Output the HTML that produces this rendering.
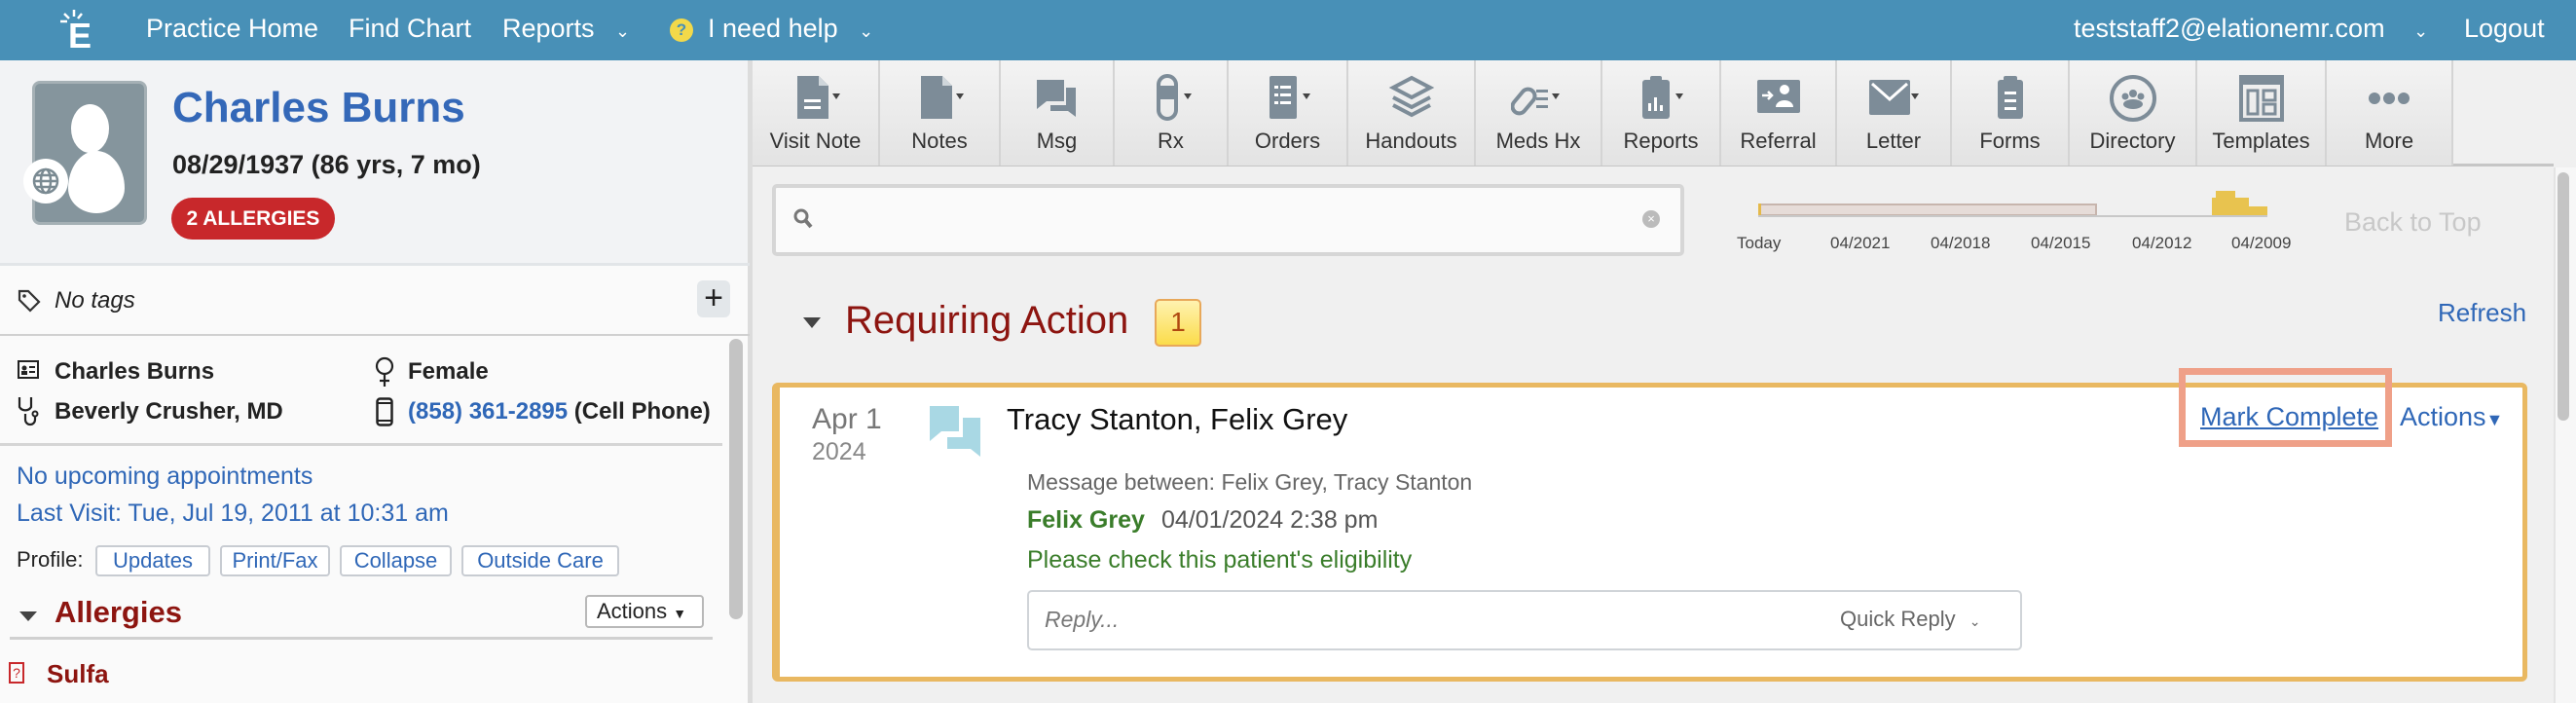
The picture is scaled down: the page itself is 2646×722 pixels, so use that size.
<!DOCTYPE html>
<html><head><meta charset="utf-8"><style>
*{margin:0;padding:0;box-sizing:border-box}
body{width:2646px;height:722px;overflow:hidden;font-family:"Liberation Sans",sans-serif;background:#f0f0f0;position:relative}
.a{position:absolute;white-space:nowrap}
.top{position:absolute;left:0;top:0;width:2646px;height:62px;background:#4890b7}
.nav{color:#fff;font-size:27px;top:14px}
.tb{position:absolute;top:62px;height:108px;border-right:2px solid #d4d4d4;background:linear-gradient(#f3f3f3,#e3e3e3)}
.tb span{position:absolute;bottom:12px;left:0;right:0;text-align:center;font-size:22px;color:#333}
.tb svg{position:absolute;top:14px;left:50%;transform:translateX(-50%)}
.blue{color:#2f67b7}
.pb{position:absolute;top:560px;height:32px;border:2px solid #c8ccd2;border-radius:4px;background:#fff;color:#2f67b7;font-size:22px;text-align:center;line-height:28px}
.tl{font-size:17px;color:#444;top:240px}
</style></head><body>
<div class="top"></div>
<div class="a" style="left:52px;top:30px;width:60px;height:42px;border-radius:0 0 30px 30px;background:#4890b7"></div>
<div class="a" style="left:70px;top:16px;color:#fff;font-size:36px;font-weight:bold">E</div>
<svg class="a" style="left:62px;top:10px" width="24" height="20"><g stroke="#fff" stroke-width="2.5"><line x1="14" y1="0" x2="14" y2="7"/><line x1="4" y1="4" x2="9" y2="9"/><line x1="22" y1="4" x2="18" y2="9"/><line x1="0" y1="12" x2="7" y2="12"/></g></svg>
<div class="a nav" style="left:150px">Practice Home</div>
<div class="a nav" style="left:358px">Find Chart</div>
<div class="a nav" style="left:516px">Reports <span style="font-size:18px;margin-left:14px">&#8964;</span></div>
<div class="a" style="left:688px;top:19px;width:24px;height:24px;border-radius:50%;background:#f2d94a;color:#4890b7;font-size:17px;font-weight:bold;text-align:center;line-height:24px">?</div>
<div class="a nav" style="left:727px">I need help <span style="font-size:18px;margin-left:14px">&#8964;</span></div>
<div class="a nav" style="left:2130px">teststaff2@elationemr.com <span style="font-size:18px;margin-left:22px">&#8964;</span></div>
<div class="a nav" style="left:2531px">Logout</div>

<!-- left panel -->
<div class="a" style="left:0;top:62px;width:770px;height:208px;background:#f2f3f5"></div>
<div class="a" style="left:0;top:270px;width:770px;height:452px;background:#fafafa"></div>
<div class="a" style="left:768px;top:62px;width:5px;height:660px;background:#dcdcdc"></div>
<div class="a" style="left:33px;top:83px;width:118px;height:148px;border-radius:8px;background:#85959d;border:3px solid #a5b0b5"></div>
<div class="a" style="left:73px;top:107px;width:39px;height:50px;border-radius:50%;background:#fff"></div>
<div class="a" style="left:70px;top:155px;width:58px;height:64px;border-radius:50% 50% 50% 50%/60% 60% 40% 40%;background:#fff"></div>
<div class="a" style="left:24px;top:163px;width:46px;height:46px;border-radius:50%;background:#fff"></div>
<svg class="a" style="left:33px;top:172px" width="28" height="28" viewBox="0 0 28 28"><g fill="none" stroke="#7a8a92" stroke-width="2.5"><circle cx="14" cy="14" r="12"/><ellipse cx="14" cy="14" rx="5" ry="12"/><line x1="2" y1="14" x2="26" y2="14"/><line x1="4" y1="8" x2="24" y2="8"/><line x1="4" y1="20" x2="24" y2="20"/></g></svg>
<div class="a" style="left:177px;top:86px;font-size:44px;font-weight:bold;color:#3468b8">Charles Burns</div>
<div class="a" style="left:177px;top:154px;font-size:27px;font-weight:bold;color:#222">08/29/1937 (86 yrs, 7 mo)</div>
<div class="a" style="left:176px;top:203px;width:168px;height:43px;border-radius:22px;background:#c8282b;color:#fff;font-size:21px;font-weight:bold;text-align:center;line-height:43px">2 ALLERGIES</div>

<div class="a" style="left:0;top:270px;width:770px;height:3px;background:#e2e5e8"></div>
<svg class="a" style="left:17px;top:296px" width="26" height="26" viewBox="0 0 26 26"><path d="M3 3h9l11 11-9 9L3 12z" fill="none" stroke="#333" stroke-width="2.2"/><circle cx="8" cy="8" r="1.8" fill="#333"/></svg>
<div class="a" style="left:56px;top:295px;font-size:24px;font-style:italic;color:#222">No tags</div>
<div class="a" style="left:716px;top:288px;width:34px;height:38px;border-radius:6px;background:#e3e7ea;font-size:34px;text-align:center;line-height:36px;color:#222">+</div>
<div class="a" style="left:0;top:343px;width:770px;height:2px;background:#d0d0d0"></div>
<svg class="a" style="left:18px;top:370px" width="22" height="20"><rect x="1" y="1" width="20" height="17" fill="none" stroke="#222" stroke-width="2"/><circle cx="7" cy="8" r="2.5" fill="#222"/><rect x="4" y="11" width="6" height="4" fill="#222"/><line x1="12" y1="7" x2="18" y2="7" stroke="#222" stroke-width="2"/><line x1="12" y1="12" x2="18" y2="12" stroke="#222" stroke-width="2"/></svg>
<div class="a" style="left:56px;top:368px;font-size:24px;font-weight:bold;color:#222">Charles Burns</div>
<svg class="a" style="left:16px;top:406px" width="24" height="32"><path d="M4 2v10a7 7 0 0 0 12 0V2M10 19v6a5 5 0 0 0 10 0v-4" fill="none" stroke="#222" stroke-width="2.2"/><circle cx="20" cy="19" r="2.5" fill="none" stroke="#222" stroke-width="2"/></svg>
<div class="a" style="left:56px;top:409px;font-size:24px;font-weight:bold;color:#222">Beverly Crusher, MD</div>
<svg class="a" style="left:385px;top:366px" width="20" height="32"><circle cx="10" cy="10" r="8" fill="none" stroke="#222" stroke-width="2.2"/><line x1="10" y1="18" x2="10" y2="31" stroke="#222" stroke-width="2.2"/><line x1="5" y1="25" x2="15" y2="25" stroke="#222" stroke-width="2.2"/></svg>
<div class="a" style="left:419px;top:368px;font-size:24px;font-weight:bold;color:#222">Female</div>
<svg class="a" style="left:386px;top:408px" width="18" height="30"><rect x="1.5" y="1.5" width="15" height="27" rx="3" fill="none" stroke="#222" stroke-width="2.5"/><line x1="2" y1="6" x2="16" y2="6" stroke="#222" stroke-width="2"/><line x1="2" y1="24" x2="16" y2="24" stroke="#222" stroke-width="2"/></svg>
<div class="a" style="left:419px;top:409px;font-size:24px;font-weight:bold;color:#222"><span class="blue">(858) 361-2895</span> (Cell Phone)</div>
<div class="a" style="left:0;top:455px;width:742px;height:3px;background:#d5d5d5"></div>
<div class="a blue" style="left:17px;top:475px;font-size:25px">No upcoming appointments</div>
<div class="a blue" style="left:17px;top:513px;font-size:25px">Last Visit: Tue, Jul 19, 2011 at 10:31 am</div>
<div class="a" style="left:17px;top:562px;font-size:22px;color:#222">Profile:</div>
<div class="pb" style="left:98px;width:118px">Updates</div>
<div class="pb" style="left:226px;width:113px">Print/Fax</div>
<div class="pb" style="left:349px;width:115px">Collapse</div>
<div class="pb" style="left:474px;width:162px">Outside Care</div>
<div class="a" style="left:20px;top:628px;width:0;height:0;border-left:9px solid transparent;border-right:9px solid transparent;border-top:10px solid #444"></div>
<div class="a" style="left:56px;top:611px;font-size:31px;font-weight:bold;color:#8d1510">Allergies</div>
<div class="a" style="left:601px;top:611px;width:122px;height:34px;border:2px solid #b8b8b8;border-radius:4px;background:#fff;font-size:22px;padding-left:10px;line-height:30px;color:#222">Actions <span style="font-size:14px">&#9660;</span></div>
<div class="a" style="left:10px;top:654px;width:722px;height:3px;background:#d0d0d0"></div>
<div class="a" style="left:9px;top:680px;width:16px;height:22px;border:2px solid #c8282b;color:#c8282b;font-size:14px;text-align:center;line-height:18px">?</div>
<div class="a" style="left:48px;top:677px;font-size:26px;font-weight:bold;color:#8d1510">Sulfa</div>
<div class="a" style="left:749px;top:348px;width:14px;height:288px;border-radius:7px;background:#c4c4c4"></div>

<!-- toolbar -->
<div class="a" style="left:773px;top:62px;width:1873px;height:108px;background:#f0f0f0"></div>
<div class="a" style="left:773px;top:168px;width:1850px;height:3px;background:#c6c6c6"></div>
<div class="tb" style="left:773px;width:131px"><svg width="50" height="50"><path d="M6 2h22l10 10v34H6z" fill="#7d8c98"/><path d="M28 2v10h10" fill="#cfd6db"/><rect x="13" y="26" width="17" height="3" fill="#fff"/><rect x="13" y="33" width="17" height="3" fill="#fff"/><path d="M42 20h8l-4 6z" fill="#444"/></svg><span>Visit Note</span></div>
<div class="tb" style="left:904px;width:124px"><svg width="50" height="50"><path d="M6 2h22l10 10v34H6z" fill="#7d8c98"/><path d="M28 2v10h10" fill="#cfd6db"/><path d="M42 20h8l-4 6z" fill="#444"/></svg><span>Notes</span></div>
<div class="tb" style="left:1028px;width:117px"><svg width="50" height="50"><path d="M4 6h28v22H14l-10 8z" fill="#7d8c98"/><path d="M34 14h10v30l-8-6H18v-6h16z" fill="#7d8c98"/></svg><span>Msg</span></div>
<div class="tb" style="left:1145px;width:117px"><svg width="50" height="50"><rect x="12" y="2" width="18" height="44" rx="9" fill="none" stroke="#7d8c98" stroke-width="4"/><path d="M12 12h18v14H12z" fill="#7d8c98"/><path d="M38 20h8l-4 6z" fill="#444"/></svg><span>Rx</span></div>
<div class="tb" style="left:1262px;width:123px"><svg width="50" height="50"><rect x="6" y="2" width="28" height="44" rx="2" fill="#7d8c98"/><g fill="#fff"><rect x="11" y="12" width="4" height="3"/><rect x="11" y="20" width="4" height="3"/><rect x="11" y="28" width="4" height="3"/><rect x="17" y="12" width="11" height="3"/><rect x="17" y="20" width="11" height="3"/><rect x="17" y="28" width="11" height="3"/></g><path d="M40 20h8l-4 6z" fill="#444"/></svg><span>Orders</span></div>
<div class="tb" style="left:1385px;width:131px"><svg width="50" height="50"><g fill="none" stroke="#7d8c98" stroke-width="4"><path d="M6 14l19-10 19 10-19 10z"/><path d="M6 24l19 10 19-10"/><path d="M6 32l19 10 19-10"/></g></svg><span>Handouts</span></div>
<div class="tb" style="left:1516px;width:130px"><svg width="56" height="50"><rect x="6" y="14" width="14" height="28" rx="7" transform="rotate(40 13 28)" fill="none" stroke="#7d8c98" stroke-width="4"/><g fill="#7d8c98"><rect x="26" y="16" width="12" height="3"/><rect x="26" y="24" width="12" height="3"/><rect x="26" y="32" width="12" height="3"/></g><path d="M42 20h8l-4 6z" fill="#444"/></svg><span>Meds Hx</span></div>
<div class="tb" style="left:1646px;width:122px"><svg width="50" height="50"><rect x="6" y="6" width="28" height="40" rx="3" fill="#7d8c98"/><rect x="14" y="2" width="12" height="7" rx="2" fill="#7d8c98"/><g fill="#fff"><rect x="12" y="30" width="3" height="8"/><rect x="18" y="24" width="3" height="14"/><rect x="24" y="32" width="3" height="6"/></g><path d="M40 20h8l-4 6z" fill="#444"/></svg><span>Reports</span></div>
<div class="tb" style="left:1768px;width:119px"><svg width="50" height="50"><rect x="3" y="6" width="44" height="34" rx="2" fill="#7d8c98"/><circle cx="31" cy="16" r="5" fill="#fff"/><path d="M22 34a9 7 0 0 1 18 0z" fill="#fff"/><path d="M8 22h10m-4-4l4 4-4 4" stroke="#fff" stroke-width="2.5" fill="none"/></svg><span>Referral</span></div>
<div class="tb" style="left:1887px;width:118px"><svg width="56" height="50"><rect x="3" y="6" width="42" height="36" rx="2" fill="#7d8c98"/><path d="M6 10l18 16 18-16" stroke="#fff" stroke-width="3" fill="none"/><path d="M46 20h8l-4 6z" fill="#444"/></svg><span>Letter</span></div>
<div class="tb" style="left:2005px;width:121px"><svg width="50" height="50"><rect x="12" y="6" width="26" height="40" rx="3" fill="#7d8c98"/><rect x="18" y="2" width="14" height="7" rx="2" fill="#7d8c98"/><g fill="#fff"><rect x="19" y="18" width="12" height="3"/><rect x="19" y="26" width="12" height="3"/><rect x="19" y="34" width="12" height="3"/></g></svg><span>Forms</span></div>
<div class="tb" style="left:2126px;width:131px"><svg width="50" height="50"><circle cx="25" cy="25" r="22" fill="none" stroke="#7d8c98" stroke-width="4"/><g fill="#7d8c98"><circle cx="25" cy="20" r="4"/><circle cx="17" cy="23" r="3.5"/><circle cx="33" cy="23" r="3.5"/><ellipse cx="25" cy="31" rx="10" ry="5"/></g></svg><span>Directory</span></div>
<div class="tb" style="left:2257px;width:133px"><svg width="50" height="50"><rect x="4" y="3" width="42" height="44" fill="none" stroke="#7d8c98" stroke-width="4"/><rect x="4" y="3" width="42" height="8" fill="#7d8c98"/><rect x="11" y="17" width="10" height="24" fill="none" stroke="#7d8c98" stroke-width="3"/><rect x="27" y="17" width="12" height="10" fill="none" stroke="#7d8c98" stroke-width="3"/><rect x="27" y="31" width="12" height="10" fill="none" stroke="#7d8c98" stroke-width="3"/></svg><span>Templates</span></div>
<div class="tb" style="left:2390px;width:130px"><svg width="50" height="50"><g fill="#7d8c98"><circle cx="10" cy="25" r="6"/><circle cx="25" cy="25" r="6"/><circle cx="40" cy="25" r="6"/></g></svg><span>More</span></div>

<!-- search + timeline -->
<div class="a" style="left:793px;top:189px;width:937px;height:74px;border:4px solid #d6d6d6;border-radius:5px;background:#fafafa"></div>
<svg class="a" style="left:814px;top:213px" width="22" height="24"><circle cx="9" cy="9" r="6" fill="none" stroke="#777" stroke-width="3"/><line x1="13" y1="13" x2="19" y2="20" stroke="#777" stroke-width="4"/></svg>
<div class="a" style="left:1687px;top:216px;width:18px;height:18px;border-radius:50%;background:#bbb;color:#fff;font-size:13px;text-align:center;line-height:18px">×</div>
<div class="a" style="left:1806px;top:209px;width:348px;height:13px;background:#e6dcd8;border:2px solid #c7b5ad"></div>
<div class="a" style="left:1806px;top:209px;width:3px;height:13px;background:#e4b94a"></div>
<div class="a" style="left:1806px;top:221px;width:523px;height:2px;background:#c8c8c8"></div>
<div class="a" style="left:2272px;top:203px;width:38px;height:18px;background:#e8c34f"></div>
<div class="a" style="left:2276px;top:196px;width:20px;height:8px;background:#e8c34f"></div>
<div class="a" style="left:2296px;top:212px;width:33px;height:9px;background:#e8c34f"></div>
<div class="a tl" style="left:1784px">Today</div>
<div class="a tl" style="left:1880px">04/2021</div>
<div class="a tl" style="left:1983px">04/2018</div>
<div class="a tl" style="left:2086px">04/2015</div>
<div class="a tl" style="left:2190px">04/2012</div>
<div class="a tl" style="left:2292px">04/2009</div>
<div class="a" style="left:2408px;top:213px;font-size:27px;color:#c8c8c8">Back to Top</div>
<div class="a" style="left:2623px;top:172px;width:23px;height:550px;background:#f7f7f7;border-left:2px solid #e4e4e4"></div>
<div class="a" style="left:2627px;top:177px;width:12px;height:255px;border-radius:6px;background:#c4c4c4"></div>

<!-- requiring action -->
<div class="a" style="left:825px;top:326px;width:0;height:0;border-left:9px solid transparent;border-right:9px solid transparent;border-top:11px solid #444"></div>
<div class="a" style="left:868px;top:307px;font-size:40px;color:#8d1510">Requiring Action</div>
<div class="a" style="left:1186px;top:307px;width:48px;height:49px;border:2px solid #e8a85a;border-radius:5px;background:linear-gradient(#fff2b0,#fbdc4a);color:#b04810;font-size:28px;text-align:center;line-height:44px">1</div>
<div class="a blue" style="left:2504px;top:306px;font-size:26px">Refresh</div>

<div class="a" style="left:793px;top:393px;width:1803px;height:307px;background:#fff;border:5px solid #e9b861;border-left-width:8px;border-radius:6px"></div>
<div class="a" style="left:834px;top:414px;font-size:30px;color:#777">Apr 1</div>
<div class="a" style="left:834px;top:450px;font-size:25px;color:#888">2024</div>
<svg class="a" style="left:953px;top:415px" width="56" height="58"><path d="M2 2h30v26H14l-12 10z" fill="#a9d8e4"/><path d="M36 14h18v40l-10-8H20v-12h16z" fill="#a9d8e4"/></svg>
<div class="a" style="left:1034px;top:413px;font-size:31px;color:#111">Tracy Stanton, Felix Grey</div>
<div class="a" style="left:2238px;top:378px;width:219px;height:81px;border:7px solid #efa088"></div>
<div class="a" style="left:2260px;top:413px;font-size:27px;color:#2f67b7;text-decoration:underline">Mark Complete</div>
<div class="a" style="left:2465px;top:413px;font-size:27px;color:#2f67b7">Actions<span style="font-size:18px">&#9660;</span></div>
<div class="a" style="left:1055px;top:482px;font-size:23px;color:#666">Message between: Felix Grey, Tracy Stanton</div>
<div class="a" style="left:1055px;top:520px;font-size:25px;color:#3a7d2a;font-weight:bold">Felix Grey</div>
<div class="a" style="left:1193px;top:520px;font-size:25px;color:#555">04/01/2024 2:38 pm</div>
<div class="a" style="left:1055px;top:561px;font-size:25px;color:#3a7d2a">Please check this patient's eligibility</div>
<div class="a" style="left:1055px;top:606px;width:1022px;height:62px;border:2px solid #d0d4d8;border-radius:5px;background:#fff"></div>
<div class="a" style="left:1073px;top:623px;font-size:23px;font-style:italic;color:#777">Reply...</div>
<div class="a" style="left:1890px;top:623px;font-size:22px;color:#666">Quick Reply <span style="font-size:14px;margin-left:8px">&#8964;</span></div>
</body></html>
